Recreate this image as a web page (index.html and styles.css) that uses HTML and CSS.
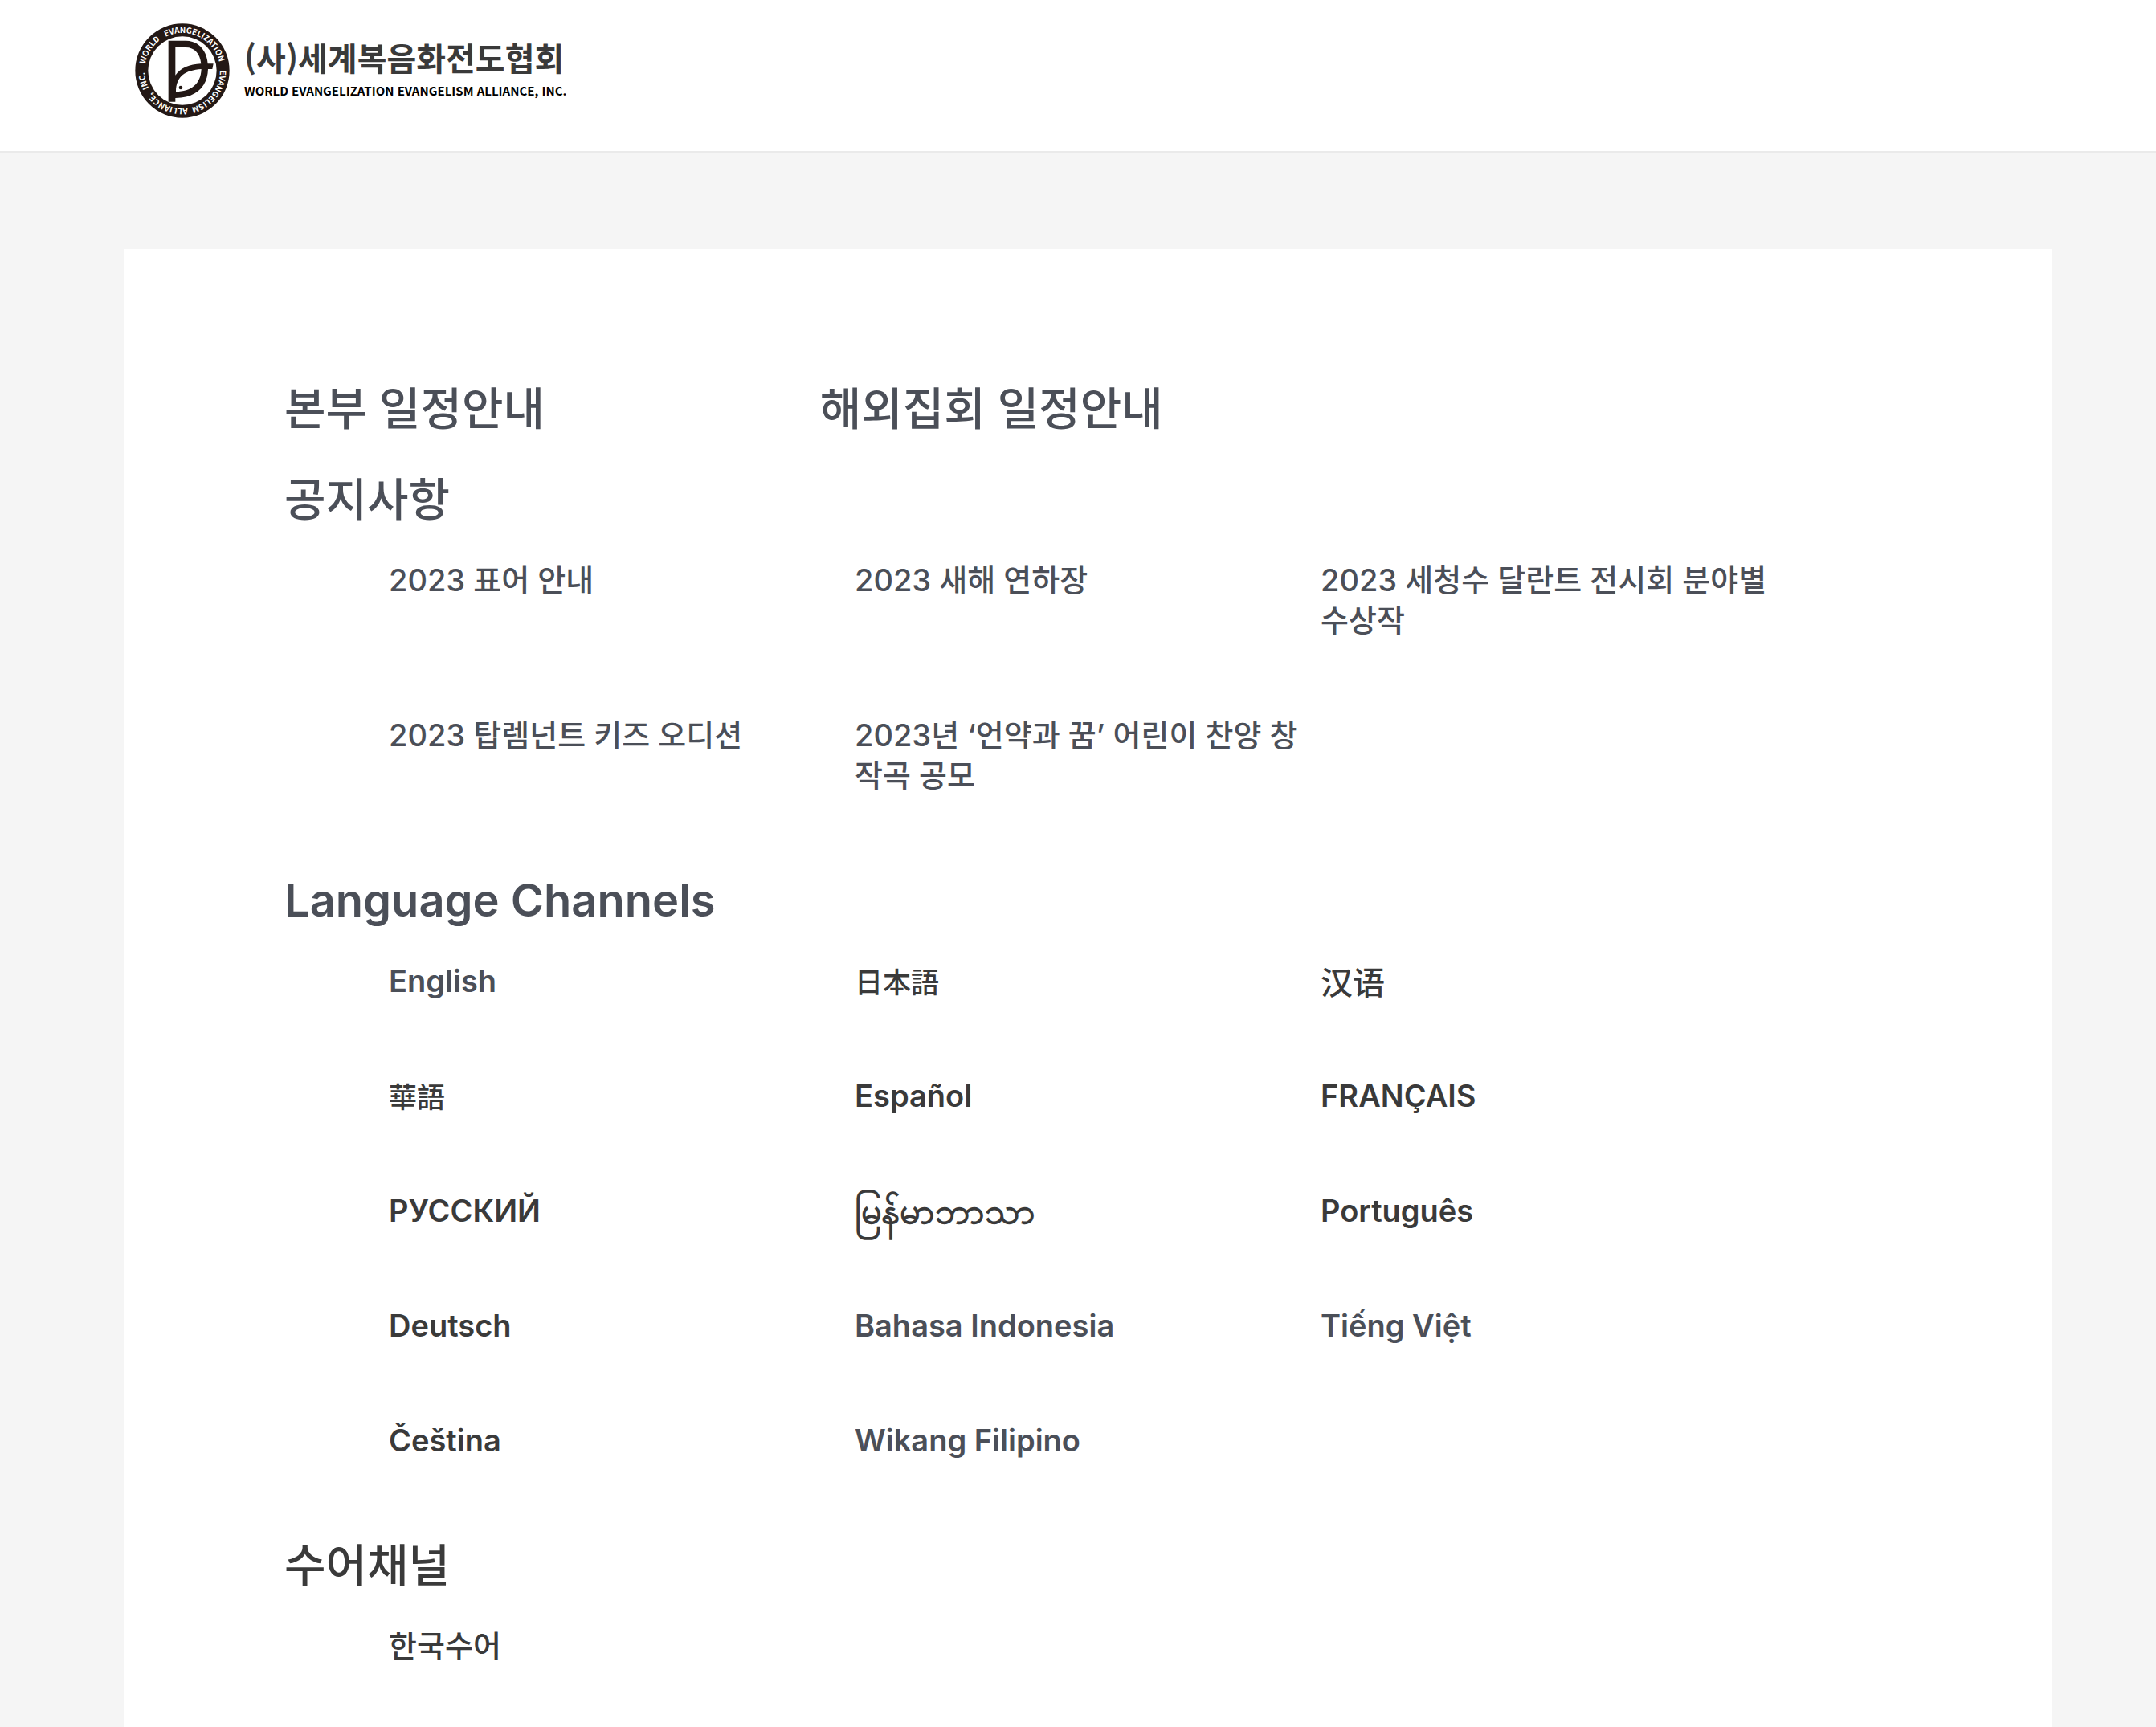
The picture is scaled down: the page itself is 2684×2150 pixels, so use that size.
FILE: index.html
```html
<!DOCTYPE html>
<html lang="ko">
  <head>
    <meta charset="UTF-8" />
    <meta name="viewport" content="width=device-width, initial-scale=1" />
    <title>(사)세계복음화전도협회</title>
    <link rel="stylesheet" href="styles.css">
  </head>
  <body>
    <header class="site-header">
      <a class="logo" href="/">
        <svg class="logo-mark" viewBox="0 0 354 354" aria-hidden="true">
          <defs>
            <path id="ring" d="M36 177 A141 141 0 0 1 318 177 A141 141 0 0 1 36 177" />
          </defs>
          <circle cx="177" cy="177" r="176" fill="#231815" />
          <circle cx="177" cy="177" r="128" fill="#fff" />
          <g class="ring-text">
            <text><textPath href="#ring" startOffset="24">WORLD</textPath></text>
            <text><textPath href="#ring" startOffset="156">EVANGELIZATION</textPath></text>
            <text><textPath href="#ring" startOffset="441">EVANGELISM</textPath></text>
            <text><textPath href="#ring" startOffset="645">ALLIANCE,</textPath></text>
            <text><textPath href="#ring" startOffset="818">INC.</textPath></text>
          </g>
          <path fill="#231815" fill-rule="evenodd" d="M125 65 H190 C236 65 267 98 272 151 H293 L289 171 H273 C271 237 228 279 151 279 V293 H125 Z M151 90 V194 C170 167 203 153 247 151 C243 113 223 90 190 90 Z M248 171 C190 175 154 196 153 255 C211 255 246 226 248 171 Z" />
          <circle cx="171" cy="240" r="7" fill="#231815" />
        </svg>
        <span class="logo-text">
          <span class="logo-name">(사)세계복음화전도협회</span>
          <span class="logo-sub">WORLD EVANGELIZATION EVANGELISM ALLIANCE, INC.</span>
        </span>
      </a>
    </header>

    <main class="page">
      <article class="content">
        <div class="top-links">
          <h2><a href="#">본부 일정안내</a></h2>
          <h2><a href="#">해외집회 일정안내</a></h2>
        </div>

        <section>
          <h2><a href="#">공지사항</a></h2>
          <ul class="link-grid">
            <li><a href="#">2023 표어 안내</a></li>
            <li><a href="#">2023 새해 연하장</a></li>
            <li><a href="#">2023 세청수 달란트 전시회 분야별 수상작</a></li>
            <li><a href="#">2023 탑렘넌트 키즈 오디션</a></li>
            <li><a href="#">2023년 ‘언약과 꿈’ 어린이 찬양 창작곡 공모</a></li>
          </ul>
        </section>

        <section>
          <h2 lang="en">Language Channels</h2>
          <ul class="link-grid">
            <li><a href="#" lang="en">English</a></li>
            <li><a class="dark" href="#" lang="ja">日本語</a></li>
            <li><a class="dark" href="#" lang="zh-Hans">汉语</a></li>
            <li><a class="dark" href="#" lang="zh-Hant">華語</a></li>
            <li><a class="dark" href="#" lang="es">Español</a></li>
            <li><a class="dark" href="#" lang="fr">FRANÇAIS</a></li>
            <li><a class="dark" href="#" lang="ru">РУССКИЙ</a></li>
            <li><a class="dark" href="#" lang="my">မြန်မာဘာသာ</a></li>
            <li><a class="dark" href="#" lang="pt">Português</a></li>
            <li><a class="dark" href="#" lang="de">Deutsch</a></li>
            <li><a href="#" lang="id">Bahasa Indonesia</a></li>
            <li><a href="#" lang="vi">Tiếng Việt</a></li>
            <li><a class="dark" href="#" lang="cs">Čeština</a></li>
            <li><a href="#" lang="fil">Wikang Filipino</a></li>
          </ul>
        </section>

        <section>
          <h2><a class="dark" href="#">수어채널</a></h2>
          <ul class="link-grid">
            <li><a class="dark" href="#">한국수어</a></li>
          </ul>
        </section>
      </article>
    </main>
  </body>
</html>
```
FILE: styles.css
```css
:root {
  --heading: #4b4f58;
  --dark: #3a3a3a;
  --page-bg: #f5f5f5;
  --border: #eaeaea;
}

* {
  box-sizing: border-box;
}

body {
  margin: 0;
  font-family: Inter, "Noto Sans CJK KR", sans-serif;
  background-color: var(--page-bg);
  color: var(--heading);
}

a {
  color: inherit;
  text-decoration: none;
}

a:hover {
  text-decoration: underline;
}

.dark {
  color: var(--dark);
}

/* Header */
.site-header {
  background: white;
  border-bottom: 2px solid var(--border);
  padding: 29px 168px 41px;
}

.logo {
  display: inline-flex;
  align-items: center;
  gap: 18px;
  vertical-align: top;
  font-family: "Noto Sans CJK KR", sans-serif;
  font-weight: bold;
}

.logo:hover {
  text-decoration: none;
}

.logo-mark {
  display: block;
  width: 118px;
  height: 118px;
}

.ring-text {
  fill: white;
  font-size: 30px;
  font-weight: bold;
}

.logo-text {
  display: flex;
  flex-direction: column;
}

.logo-name {
  color: var(--dark);
  font-size: 40px;
  line-height: 50px;
}

.logo-sub {
  color: black;
  font-size: 15px;
  line-height: 34px;
}

/* Content */
.page {
  padding: 120px 130px 0 154px;
}

.content {
  background: white;
  padding: 161px 200px 100px;
}

h2 {
  margin: 0 0 36px;
  font-size: 56px;
  font-weight: 500;
  line-height: 77px;
}

.top-links {
  display: grid;
  grid-template-columns: repeat(3, 1fr);
}

.link-grid {
  display: grid;
  grid-template-columns: repeat(3, 1fr);
  margin: 0;
  padding: 0 130px;
  list-style: none;
  font-size: 38px;
  font-weight: 500;
  line-height: 50px;
}

.link-grid li {
  padding: 0 20px 93px 0;
}

.link-grid a {
  display: block;
}

/* Latin and Cyrillic names are set heavier than the Hangul */
h2:lang(en),
.link-grid a:not(:lang(ko)) {
  font-weight: 600;
}

.link-grid a:lang(ja) {
  font-family: "Noto Sans CJK JP", sans-serif;
  font-size: 35px;
  font-weight: 500;
}

.link-grid a:lang(zh-Hans) {
  font-family: "Noto Sans CJK SC", sans-serif;
  font-size: 40px;
  font-weight: 500;
}

.link-grid a:lang(zh-Hant) {
  font-family: "Noto Sans CJK TC", sans-serif;
  font-size: 35px;
  font-weight: 500;
}

.link-grid a:lang(my) {
  font-size: 45px;
}
```
